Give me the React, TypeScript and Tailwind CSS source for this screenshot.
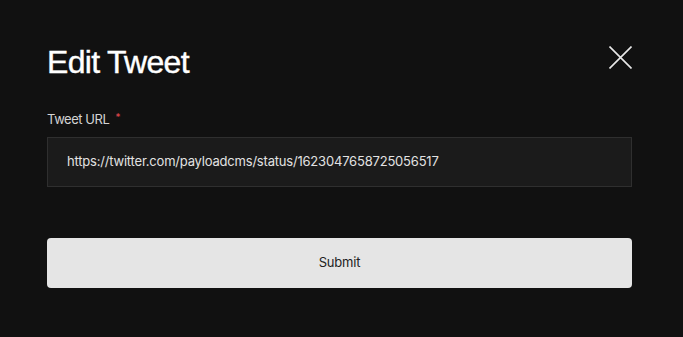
import React from "react";

export default function App() {
  return (
    <div
      className="w-[683px] h-[337px] bg-[#111111] text-white overflow-hidden"
      style={{ fontFamily: "Inter, 'Noto Sans', sans-serif" }}
    >
      <div className="pl-[47px] pt-[46px] w-[632px]">
        <div className="flex items-start justify-between">
          <h1
            className="text-[32px] leading-[32px] font-normal tracking-[-0.7px] text-white [-webkit-text-stroke:0.4px_white]"
            style={{ fontFamily: "'Liberation Sans', Arial, sans-serif" }}
          >
            Edit Tweet
          </h1>
          <button className="w-[23px] h-[23px] flex items-center justify-center">
            <svg width="23" height="23" viewBox="0 0 23 23" fill="none">
              <path d="M0.5 0.5 L22.5 22.5 M22.5 0.5 L0.5 22.5" stroke="#e8e8e8" strokeWidth="1.6" />
            </svg>
          </button>
        </div>
        <div className="mt-[33px] flex items-center text-[13px] leading-[16px] tracking-[-0.45px] text-[#d4d4d4]">
          <span>Tweet URL</span>
          <span className="ml-[6px] text-[#e5484d] text-[10px] -mt-[5px]">*</span>
        </div>
        <div className="mt-[10px] h-[50px] w-[585px] bg-[#1b1b1b] border border-[#2f2f2f] flex items-center px-[19px] text-[13px] tracking-[-0.2px] text-[#e2e2e2]">
          https://twitter.com/payloadcms/status/1623047658725056517
        </div>
        <button className="mt-[51px] h-[50px] w-[585px] bg-[#e5e5e5] rounded-[4px] flex items-center justify-center text-[13px] tracking-[-0.2px] text-[#222222]">
          Submit
        </button>
      </div>
    </div>
  );
}
